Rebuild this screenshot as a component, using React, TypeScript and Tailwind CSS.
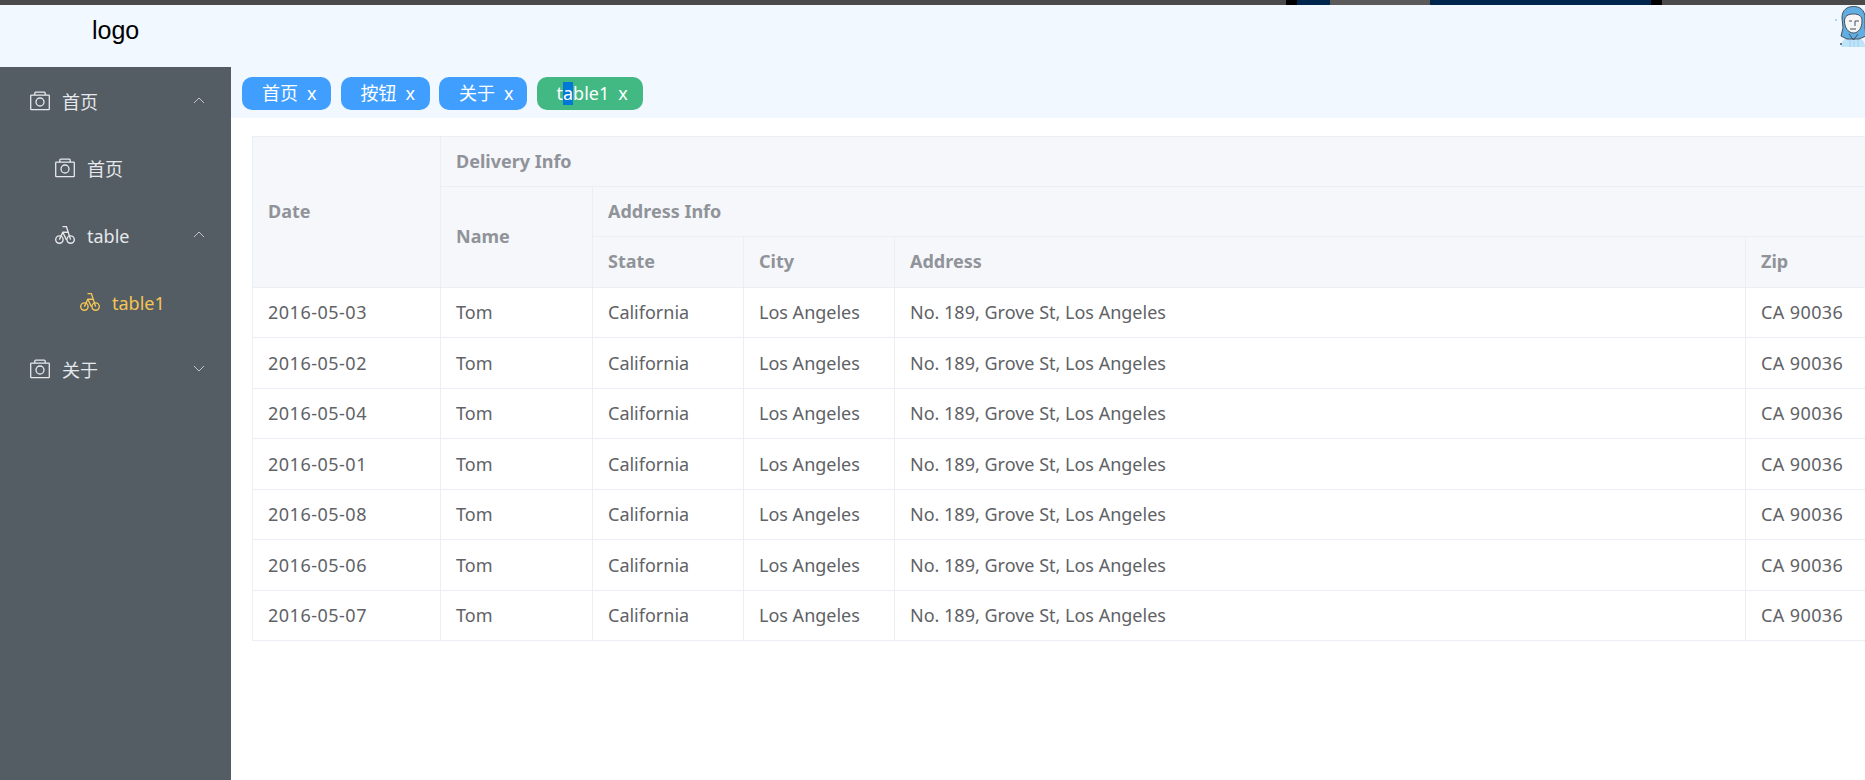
const rows = [
  "2016-05-03",
  "2016-05-02",
  "2016-05-04",
  "2016-05-01",
  "2016-05-08",
  "2016-05-06",
  "2016-05-07",
];

function CameraIcon({ className }: { className?: string }) {
  return (
    <svg viewBox="0 0 20 20" fill="none" stroke="currentColor" strokeWidth="1.3" className={className}>
      <rect x="0.7" y="4.2" width="18.6" height="14.4" rx="0.6" />
      <path d="M4.8 4.2V2C4.8 1.5 5.2 1.1 5.7 1.1H14.3C14.8 1.1 15.2 1.5 15.2 2V4.2" />
      <circle cx="10" cy="11" r="4" />
    </svg>
  );
}

function BicycleIcon({ className }: { className?: string }) {
  return (
    <svg viewBox="0 0 20 20" fill="none" stroke="currentColor" strokeWidth="1.4" className={className}>
      <circle cx="4.4" cy="14.6" r="3.7" />
      <circle cx="15.6" cy="14.6" r="3.7" />
      <path d="M7.5 1.6H11.4L15.6 14.6" />
      <path d="M4.4 14.6L7.8 7.2H13.2" />
      <path d="M7.8 7.2L11.4 14.8" />
    </svg>
  );
}

function Chevron({ up = true }: { up?: boolean }) {
  return (
    <svg viewBox="0 0 12 7" fill="none" stroke="currentColor" strokeWidth="1" className="ml-auto mr-[26px] h-[7px] w-[12px] text-[#c0c4cc]">
      <path d={up ? "M1 6L6 1L11 6" : "M1 1L6 6L11 1"} />
    </svg>
  );
}

function Avatar() {
  return (
    <svg viewBox="0 0 30 41" className="h-[41px] w-[30px] shrink-0">
      <circle cx="1" cy="14" r="1" fill="#9cc9ec" />
      <path d="M6 41C6 35 10 31 18 31C26 31 30 35 30 41Z" fill="#bfe3f8" />
      <path d="M7 12C7 4 12 0.5 18.5 0.5C25 0.5 30 4 30 12V22L31 30L24 33H12L6 30L8 22Z" fill="#62aee3" stroke="#44515c" strokeWidth="1" />
      <path d="M9.5 15C9.5 10 13 8 18.5 8C24 8 27 10 27 15C27 22 23.5 27 18.5 27C13.5 27 9.5 22 9.5 15Z" fill="#f5f5f5" stroke="#44515c" strokeWidth="1" />
      <path d="M14 15H17M20 15H24M20 15V20M15 23H21" fill="none" stroke="#44515c" strokeWidth="1" />
      <path d="M14 28L18.5 34L23 28" fill="none" stroke="#44515c" strokeWidth="1" />
      <path d="M15 34V41M19 35V41M23 34V41" fill="none" stroke="#9fd2ef" strokeWidth="1" />
      <circle cx="6" cy="38" r="1" fill="#44515c" />
    </svg>
  );
}

function Tag({ label, green, width }: { label: React.ReactNode; green?: boolean; width: string }) {
  return (
    <div
      className={`flex h-[33px] items-center whitespace-nowrap rounded-[10px] pl-[20px] text-[18px] text-white ${width} ${
        green ? "bg-[#42b883]" : "bg-[#409eff]"
      }`}
    >
      <span>{label}</span>
      <span className="ml-[9px]">x</span>
    </div>
  );
}

function MenuRow({
  icon,
  label,
  pad,
  chevron,
  active,
}: {
  icon: React.ReactNode;
  label: string;
  pad: string;
  chevron?: "up" | "down";
  active?: boolean;
}) {
  return (
    <div className={`flex h-[67px] items-center ${pad} ${active ? "text-[#f4c653]" : "text-[#e6e8eb]"}`}>
      {icon}
      <span className="ml-[12px] pt-[3px] text-[18px]">{label}</span>
      {chevron && <Chevron up={chevron === "up"} />}
    </div>
  );
}

const th = "border border-[#ebeef5] bg-[#f5f7fa] px-[15px] pb-[1px] text-left align-middle text-[18px] font-bold text-[#909399]";
const td = "border border-[#ebeef5] px-[15px] pt-[1px] text-[18px] font-normal text-[#606266]";

export default function App() {
  return (
    <div
      className="flex h-[780px] w-full flex-col overflow-hidden bg-white"
      style={{ fontFamily: '"Noto Sans", "Noto Sans CJK SC", sans-serif' }}
    >
      <div className="flex h-[5px] shrink-0 bg-[#4a4a4a]">
        <div className="ml-[1286px] flex w-[376px] bg-black px-[11px]">
          <div className="flex flex-1 bg-[#00264d]">
            <div className="ml-[33px] h-full w-[100px] bg-[#5a5a5a]" />
          </div>
        </div>
      </div>
      <header className="flex h-[62px] shrink-0 items-start justify-between bg-[#f1f8ff]">
        <span className="ml-[92px] mt-[7px] text-[25px] text-black" style={{ fontFamily: '"Liberation Sans", sans-serif' }}>
          logo
        </span>
        <div className="mt-[1px]">
          <Avatar />
        </div>
      </header>
      <div className="flex min-h-0 flex-1">
        <aside className="w-[231px] shrink-0 bg-[#545c64]">
          <MenuRow icon={<CameraIcon className="h-[20px] w-[20px]" />} label="首页" pad="pl-[30px]" chevron="up" />
          <MenuRow icon={<CameraIcon className="h-[20px] w-[20px]" />} label="首页" pad="pl-[55px]" />
          <MenuRow icon={<BicycleIcon className="h-[20px] w-[20px]" />} label="table" pad="pl-[55px]" chevron="up" />
          <MenuRow icon={<BicycleIcon className="h-[20px] w-[20px]" />} label="table1" pad="pl-[80px]" active />
          <MenuRow icon={<CameraIcon className="h-[20px] w-[20px]" />} label="关于" pad="pl-[30px]" chevron="down" />
        </aside>
        <main className="min-w-0 flex-1 overflow-hidden">
          <div className="flex h-[51px] items-start gap-[9.5px] bg-[#f1f8ff] pl-[11px] pt-[10px]">
            <Tag label="首页" width="w-[89px]" />
            <Tag label="按钮" width="w-[89px]" />
            <Tag label="关于" width="w-[88px]" />
            <Tag
              green
              width="w-[106px]"
              label={
                <>
                  t<span className="inline-block bg-[#0078d7] leading-[23px]">a</span>ble1
                </>
              }
            />
          </div>
          <div className="ml-[21px] mt-[18px]">
            <table className="w-[1701px] table-fixed border-collapse">
              <colgroup>
                <col className="w-[188px]" />
                <col className="w-[152px]" />
                <col className="w-[151px]" />
                <col className="w-[151px]" />
                <col className="w-[851px]" />
                <col className="w-[208px]" />
              </colgroup>
              <thead>
                <tr className="h-[50px]">
                  <th rowSpan={3} className={th}>Date</th>
                  <th colSpan={5} className={th}>Delivery Info</th>
                </tr>
                <tr className="h-[50px]">
                  <th rowSpan={2} className={th}>Name</th>
                  <th colSpan={4} className={th}>Address Info</th>
                </tr>
                <tr className="h-[50.5px]">
                  <th className={th}>State</th>
                  <th className={th}>City</th>
                  <th className={th}>Address</th>
                  <th className={th}>Zip</th>
                </tr>
              </thead>
              <tbody>
                {rows.map((date) => (
                  <tr key={date} className="h-[50.5px]">
                    <td className={`${td} tracking-[0.5px]`}>{date}</td>
                    <td className={td}>Tom</td>
                    <td className={td}>California</td>
                    <td className={td}>Los Angeles</td>
                    <td className={td}>No. 189, Grove St, Los Angeles</td>
                    <td className={`${td} tracking-[0.4px]`}>CA 90036</td>
                  </tr>
                ))}
              </tbody>
            </table>
          </div>
        </main>
      </div>
    </div>
  );
}
